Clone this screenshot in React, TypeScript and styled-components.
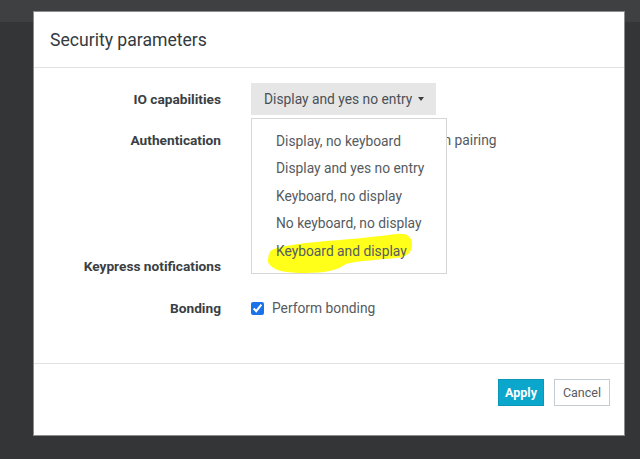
import React from "react";
import styled, { createGlobalStyle } from "styled-components";

const GlobalStyle = createGlobalStyle`
  html, body { margin: 0; padding: 0; }
  body {
    background: #343536;
    font-family: Roboto, "Liberation Sans", Arial, sans-serif;
  }
`;

const Screen = styled.div`
  position: relative;
  width: 640px;
  height: 459px;
  overflow: hidden;
  background: #343536;
`;

const AppBar = styled.div`
  height: 22px;
  background: #3f4041;
`;

const Modal = styled.div`
  position: absolute;
  left: 33px;
  top: 11px;
  width: 592px;
  height: 425px;
  box-sizing: border-box;
  background: #fff;
  border: 1px solid #8c8c8c;
  display: flex;
  flex-direction: column;
`;

const Header = styled.div`
  height: 56px;
  box-sizing: border-box;
  padding: 0 16px;
  display: flex;
  align-items: center;
  border-bottom: 1px solid #e2e2e2;
`;

const Title = styled.h4`
  margin: 0;
  font-size: 17.6px;
  font-weight: 400;
  color: #333a40;
`;

const Body = styled.div`
  flex: 1;
  padding-top: 15px;
`;

const Row = styled.div<{ $mt?: number }>`
  display: grid;
  grid-template-columns: 187px 1fr;
  column-gap: 30px;
  margin-top: ${(p) => p.$mt ?? 0}px;
`;

const Label = styled.div<{ $lh: number }>`
  text-align: right;
  font-size: 13.7px;
  font-weight: 700;
  color: #3a3f44;
  line-height: ${(p) => p.$lh}px;
  white-space: nowrap;
`;

const Lines = styled.div`
  display: flex;
  flex-direction: column;
`;

const CheckLine = styled.label`
  height: 36px;
  display: flex;
  align-items: center;
  gap: 8px;
  font-size: 13.8px;
  color: #555b61;
  white-space: nowrap;
`;

const Check = styled.input`
  width: 13px;
  height: 13px;
  margin: 0;
  accent-color: #1a73e8;
`;

const DropWrap = styled.div`
  position: relative;
  align-self: start;
  justify-self: start;
`;

const DropButton = styled.button`
  height: 32px;
  box-sizing: border-box;
  padding: 0 12px 0 13px;
  border: none;
  background: #e6e6e6;
  font-family: inherit;
  font-size: 13.8px;
  color: #4a5056;
  display: inline-flex;
  align-items: center;
  white-space: nowrap;
`;

const Caret = styled.span`
  width: 0;
  height: 0;
  margin-left: 6px;
  border-top: 4px solid #3a3f44;
  border-left: 3.5px solid transparent;
  border-right: 3.5px solid transparent;
`;

const Menu = styled.ul`
  position: absolute;
  top: calc(100% + 3px);
  left: 0;
  width: 196px;
  box-sizing: border-box;
  margin: 0;
  padding: 8px 0 8px;
  list-style: none;
  background: #fff;
  border: 1px solid #d6d6d6;
  z-index: 10;
`;

const Item = styled.li`
  position: relative;
  height: 27.5px;
  display: flex;
  align-items: center;
  padding-left: 24px;
  font-size: 13.8px;
  color: #555b61;
  white-space: nowrap;
`;

const ItemText = styled.span`
  position: relative;
  z-index: 1;
`;

const Scribble = styled.svg`
  position: absolute;
  left: 0;
  top: -7px;
  width: 150px;
  height: 44px;
  margin-left: 14px;
  z-index: 0;
`;

const Footer = styled.div`
  height: 72px;
  box-sizing: border-box;
  border-top: 1px solid #e2e2e2;
  padding: 15px 14px 0;
  display: flex;
  justify-content: flex-end;
  align-items: flex-start;
  gap: 10px;
`;

const Button = styled.button<{ $primary?: boolean }>`
  height: 27px;
  box-sizing: border-box;
  padding: 0 ${(p) => (p.$primary ? 6 : 8)}px;
  font-family: inherit;
  font-size: 12.5px;
  font-weight: ${(p) => (p.$primary ? 700 : 400)};
  color: ${(p) => (p.$primary ? "#fff" : "#555b61")};
  background: ${(p) => (p.$primary ? "#0aa6cb" : "#fff")};
  border: 1px solid ${(p) => (p.$primary ? "#0b97b8" : "#c3ccd3")};
`;

const options = [
  "Display, no keyboard",
  "Display and yes no entry",
  "Keyboard, no display",
  "No keyboard, no display",
  "Keyboard and display",
];

export default function App() {
  return (
    <Screen>
      <GlobalStyle />
      <AppBar />
      <Modal>
        <Header>
          <Title>Security parameters</Title>
        </Header>
        <Body>
          <Row>
            <Label $lh={32}>IO capabilities</Label>
            <DropWrap>
              <DropButton>
                Display and yes no entry
                <Caret />
              </DropButton>
              <Menu>
                {options.map((o, i) => (
                  <Item key={o}>
                    {i === 4 && (
                      <Scribble viewBox="0 0 150 44">
                        <path
                          d="M2 32 C2 24 4 20 8 19 C20 15 40 13 60 11 C90 9 115 6 130 4 C140 3 146 6 146 14 C146 22 142 27 130 28 C110 30 90 31 80 34 C72 40 60 43 40 43 C20 43 6 41 2 32 Z"
                          fill="#ffff1a"
                        />
                      </Scribble>
                    )}
                    <ItemText>{o}</ItemText>
                  </Item>
                ))}
              </Menu>
            </DropWrap>
          </Row>
          <Row $mt={7}>
            <Label $lh={36}>Authentication</Label>
            <Lines>
              <CheckLine>
                <Check type="checkbox" defaultChecked />
                Enable LE Secure Connection pairing
              </CheckLine>
              <CheckLine>
                <Check type="checkbox" />
                Use MITM protection
              </CheckLine>
              <CheckLine>
                <Check type="checkbox" />
                Use OOB data
              </CheckLine>
            </Lines>
          </Row>
          <Row $mt={18}>
            <Label $lh={36}>Keypress notifications</Label>
            <Lines>
              <CheckLine>
                <Check type="checkbox" />
                Use keypress notifications
              </CheckLine>
            </Lines>
          </Row>
          <Row $mt={6}>
            <Label $lh={36}>Bonding</Label>
            <Lines>
              <CheckLine>
                <Check type="checkbox" defaultChecked />
                Perform bonding
              </CheckLine>
            </Lines>
          </Row>
        </Body>
        <Footer>
          <Button $primary>Apply</Button>
          <Button>Cancel</Button>
        </Footer>
      </Modal>
    </Screen>
  );
}
